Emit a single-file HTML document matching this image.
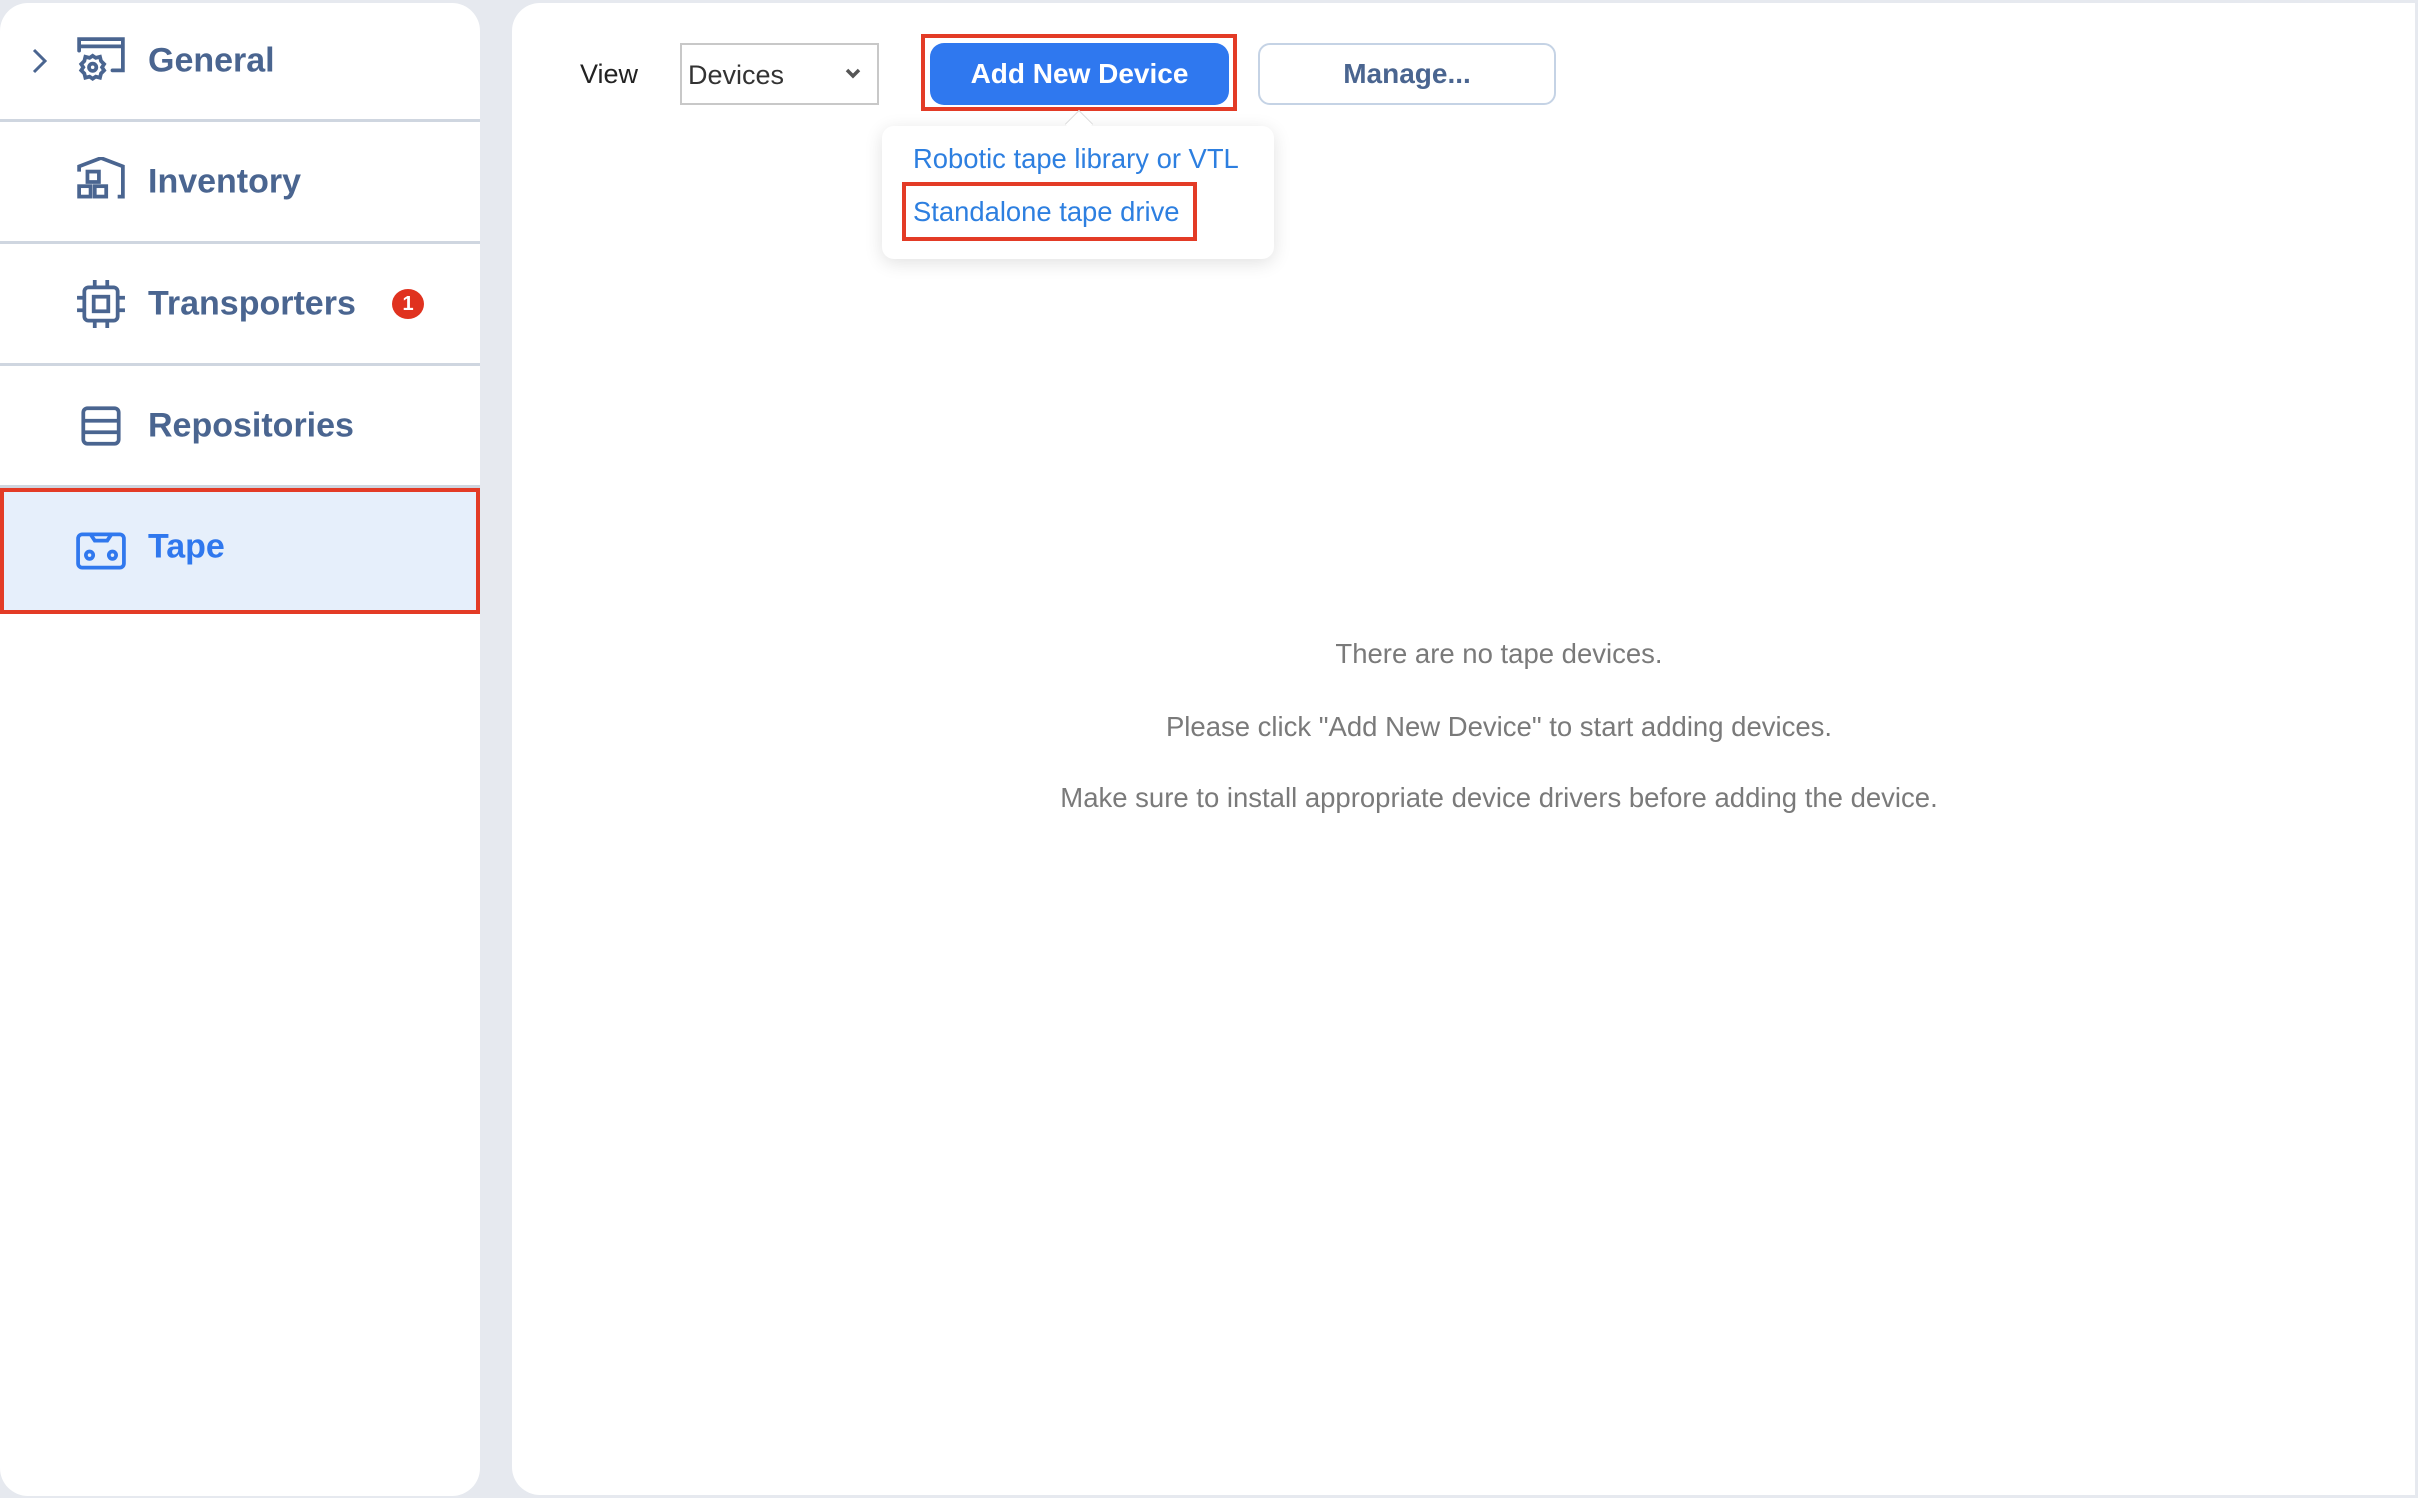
<!DOCTYPE html>
<html><head><meta charset="utf-8"><style>
*{box-sizing:border-box;margin:0;padding:0}
body{width:2418px;height:1498px;background:#e6e9ef;font-family:"Liberation Sans",sans-serif;position:relative;overflow:hidden}
.side{position:absolute;left:0;top:3px;width:480px;height:1493px;background:#fff;border-radius:28px 28px 28px 28px;overflow:hidden}
.row{position:absolute;left:0;width:480px;height:122px;border-bottom:3px solid #cfd6e0}
.row .lbl{position:absolute;left:148px;top:50%;transform:translateY(-50%);font-size:34px;font-weight:bold;color:#4a6590}
.row svg{position:absolute;left:76px;top:50%;transform:translateY(-50%)}
.main{position:absolute;left:512px;top:3px;width:1903px;height:1492px;background:#fff;border-radius:28px 0 0 28px}
.abs{position:absolute}
.empty{position:absolute;width:1600px;text-align:center;font-size:27.5px;color:#7a7a7a}
</style></head><body>
<div class="side">
 <div class="row" style="top:0;height:119px">
  <svg class="abs" style="left:30px;transform:translateY(-50%)" width="20" height="30" viewBox="0 0 20 30"><path d="M4 4 L15 15 L4 26" fill="none" stroke="#4a6590" stroke-width="3"/></svg>
  <svg width="50" height="50" viewBox="0 0 48 48" fill="none" stroke="#4a6590" stroke-width="3.6" stroke-linecap="round"><path d="M3 14 V3 H45 V33 H35 M3 10 H45"/><circle cx="16" cy="30" r="3.5"/><path d="M16 19 l3 2 4-1 1 4 3 3-2 3 2 3-3 3-1 4-4-1-3 2-3-2-4 1-1-4-3-3 2-3-2-3 3-3 1-4 4 1z"/></svg>
  <div class="lbl">General</div></div>
 <div class="row" style="top:119px">
  <svg width="50" height="50" viewBox="0 0 48 48" fill="none" stroke="#4a6590" stroke-width="3.6"><path d="M3 14 V9 L24 1 L45 9 V38 H40"/><rect x="11" y="14" width="11" height="10"/><rect x="3" y="28" width="11" height="10"/><rect x="18" y="28" width="11" height="10"/></svg>
  <div class="lbl">Inventory</div></div>
 <div class="row" style="top:241px">
  <svg width="50" height="50" viewBox="0 0 48 48" fill="none" stroke="#4a6590" stroke-width="3.6"><rect x="8" y="8" width="32" height="32" rx="4"/><rect x="17" y="17" width="14" height="14"/><path d="M18 1V8M30 1V8M18 40V47M30 40V47M1 18H8M1 30H8M40 18H47M40 30H47"/></svg>
  <div class="lbl">Transporters</div>
  <div class="abs" style="left:392px;top:50%;transform:translateY(-50%);width:32px;height:30px;border-radius:50%;background:#e0321f;color:#fff;font-weight:bold;font-size:20px;text-align:center;line-height:30px">1</div></div>
 <div class="row" style="top:363px">
  <svg width="50" height="50" viewBox="0 0 48 48" fill="none" stroke="#4a6590" stroke-width="3.6"><rect x="7" y="7" width="34" height="34" rx="4"/><path d="M7 19H41M7 30H41"/></svg>
  <div class="lbl">Repositories</div></div>
 <div class="row" style="top:485px;height:126px;background:#e6effb;border:4px solid #e33b26">
  <svg style="left:72px" width="50" height="40" viewBox="0 0 48 36" fill="none" stroke="#3078ee" stroke-width="3.6"><rect x="2" y="2" width="44" height="32" rx="4"/><path d="M14 2 L18 8 H30 L34 2"/><circle cx="13" cy="22" r="3.5"/><circle cx="35" cy="22" r="3.5"/></svg>
  <div class="lbl" style="left:144px;top:47%;color:#3078ee">Tape</div></div>
</div>
<div class="main"></div>
<div class="abs" style="left:580px;top:59px;font-size:27px;color:#222">View</div>
<div class="abs" style="left:680px;top:43px;width:199px;height:62px;border:2px solid #c8c8c8;background:#fff">
 <div class="abs" style="left:6px;top:15px;font-size:27px;color:#333">Devices</div>
 <svg class="abs" style="left:162px;top:22px" width="18" height="14" viewBox="0 0 18 14"><path d="M3 3 L9 9 L15 3" fill="none" stroke="#555" stroke-width="3.5"/></svg>
</div>
<div class="abs" style="left:921px;top:34px;width:316px;height:77px;border:4px solid #e33b26"></div>
<div class="abs" style="left:930px;top:43px;width:299px;height:62px;background:#2f78ef;border-radius:14px;color:#fff;font-weight:bold;font-size:28px;text-align:center;line-height:62px">Add New Device</div>
<div class="abs" style="left:1258px;top:43px;width:298px;height:62px;border:2px solid #c5d3e5;border-radius:12px;color:#4a6590;font-weight:bold;font-size:28px;text-align:center;line-height:58px">Manage...</div>
<div class="abs" style="left:882px;top:126px;width:392px;height:133px;background:#fff;border-radius:12px;box-shadow:0 4px 18px rgba(0,0,0,0.12)"></div>
<div class="abs" style="left:1069px;top:114px;width:20px;height:20px;background:#fff;transform:rotate(45deg);border-left:1px solid #ddd;border-top:1px solid #ddd"></div>
<div class="abs" style="left:913px;top:143px;font-size:27.4px;color:#2d7fe0">Robotic tape library or VTL</div>
<div class="abs" style="left:902px;top:182px;width:295px;height:59px;border:4px solid #e33b26"></div>
<div class="abs" style="left:913px;top:196px;font-size:27.4px;color:#2d7fe0">Standalone tape drive</div>
<div class="empty" style="left:699px;top:638px">There are no tape devices.</div>
<div class="empty" style="left:699px;top:711px">Please click "Add New Device" to start adding devices.</div>
<div class="empty" style="left:699px;top:782px">Make sure to install appropriate device drivers before adding the device.</div>
</body></html>
